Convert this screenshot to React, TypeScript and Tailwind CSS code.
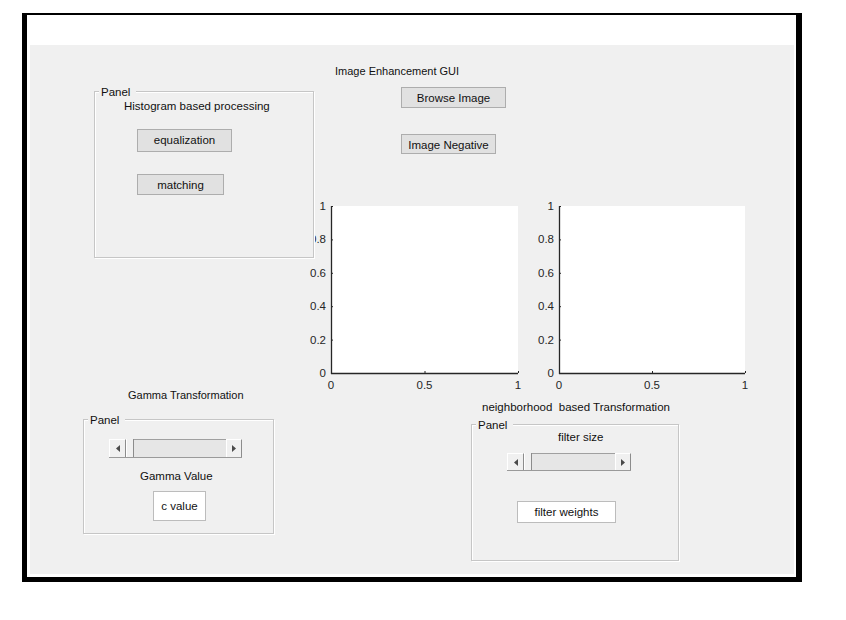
import type { ReactNode } from "react";

function Panel({ className, children }: { className: string; children: ReactNode }) {
  return (
    <div
      className={`relative border border-[#c6c6c6] bg-[#f0f0f0] shadow-[1px_1px_0_#ffffff,inset_1px_1px_0_#ffffff] ${className}`}
    >
      <span className="absolute -top-[7px] left-[4px] bg-[#f0f0f0] pl-[2px] pr-[6px] text-[11.5px] leading-[14px] text-[#111111]">
        Panel
      </span>
      <div className="flex flex-col items-start">{children}</div>
    </div>
  );
}

function Btn({ className, label }: { className: string; label: string }) {
  return (
    <button
      className={`flex items-center justify-center border border-[#adadad] bg-[#e1e1e1] text-[11.5px] whitespace-nowrap text-[#111111] ${className}`}
    >
      {label}
    </button>
  );
}

function EditBox({ className, label }: { className: string; label: string }) {
  return (
    <div
      className={`flex items-center justify-center border border-[#bcbcbc] bg-white pt-[1px] text-[11.5px] whitespace-nowrap text-[#111111] ${className}`}
    >
      {label}
    </div>
  );
}

function Arrow({ dir }: { dir: "left" | "right" }) {
  return (
    <svg width="4" height="7" viewBox="0 0 4 7">
      {dir === "left" ? (
        <polygon points="4,0 4,7 0,3.5" fill="#4a4a4a" />
      ) : (
        <polygon points="0,0 0,7 4,3.5" fill="#4a4a4a" />
      )}
    </svg>
  );
}

function Slider({ className }: { className: string }) {
  return (
    <div className={`flex border-b border-[#9a9a9a] ${className}`}>
      <div className="flex w-[17px] items-center justify-center border-t border-l border-white border-r border-r-[#8c8c8c] bg-[#f0f0f0]">
        <Arrow dir="left" />
      </div>
      <div className="w-[8px] border-l border-white border-r border-r-[#8c8c8c] bg-[#f0f0f0]" />
      <div className="flex-1 border-t border-[#a0a0a0] bg-[#e6e6e6]" />
      <div className="flex w-[16px] items-center justify-center border-t border-l border-white border-r border-r-[#8c8c8c] bg-[#f0f0f0]">
        <Arrow dir="right" />
      </div>
    </div>
  );
}

// MATLAB-style empty axes, box off, ticks 0..1
function Axes({ width, plotLeft, plotWidth, className }: { width: number; plotLeft: number; plotWidth: number; className?: string }) {
  const top = 8;
  const bottom = 175;
  const h = bottom - top;
  const yTicks = [0, 0.2, 0.4, 0.6, 0.8, 1];
  const xTicks = [0, 0.5, 1];
  return (
    <svg width={width} height={196} className={className}>
      <rect x={plotLeft} y={top} width={plotWidth} height={h} fill="#ffffff" />
      {yTicks.map((v) => (
        <g key={v}>
          <line x1={plotLeft} x2={plotLeft + 2} y1={bottom - v * h + 0.5} y2={bottom - v * h + 0.5} stroke="#262626" />
          <text
            x={plotLeft - 5}
            y={bottom - v * h + 4}
            textAnchor="end"
            fontSize="11.5"
            fill="#262626"
            fontFamily="'Liberation Sans', Arial, sans-serif"
          >
            {v === 0 || v === 1 ? String(v) : v.toFixed(1)}
          </text>
        </g>
      ))}
      {xTicks.map((v) => (
        <g key={v}>
          <line x1={plotLeft + v * plotWidth + 0.5} x2={plotLeft + v * plotWidth + 0.5} y1={bottom} y2={bottom - 2} stroke="#262626" />
          <text
            x={plotLeft + v * plotWidth}
            y={191}
            textAnchor="middle"
            fontSize="11.5"
            fill="#262626"
            fontFamily="'Liberation Sans', Arial, sans-serif"
          >
            {String(v)}
          </text>
        </g>
      ))}
      <line x1={plotLeft + 0.5} x2={plotLeft + 0.5} y1={top} y2={bottom + 1} stroke="#262626" strokeWidth="1.3" />
      <line x1={plotLeft} x2={plotLeft + plotWidth} y1={bottom + 0.5} y2={bottom + 0.5} stroke="#262626" strokeWidth="1.3" />
    </svg>
  );
}

export default function App() {
  return (
    <div className="h-[620px] w-[846px] bg-white pt-[13px] pl-[22px] font-['Liberation_Sans',Arial,sans-serif]">
      {/* figure window */}
      <div className="h-[569px] w-[780px] border-t-2 border-r-[6px] border-b-[5px] border-l-[5px] border-black bg-white pt-[30px] pl-[3px]">
        <div className="flex h-[529px] w-[764px] bg-[#f0f0f0] text-[#111111]">
          {/* LEFT COLUMN */}
          <div className="relative z-10 flex w-[284px] flex-col items-start">
            <Panel className="mt-[46px] ml-[64px] h-[167px] w-[220px]">
              <div className="mt-[7px] ml-[29px] h-[14px] text-[11.5px] leading-[14px] whitespace-nowrap">
                Histogram based processing
              </div>
              <Btn className="mt-[16px] ml-[42px] h-[23px] w-[95px] pt-[1px]" label="equalization" />
              <Btn className="mt-[22px] ml-[42px] h-[21px] w-[87px] pt-[2px]" label="matching" />
            </Panel>

            <div className="mt-[130px] ml-[98px] h-[14px] text-[11px] leading-[14px] whitespace-nowrap">
              Gamma Transformation
            </div>
            <Panel className="mt-[17px] ml-[53px] h-[115px] w-[191px]">
              <Slider className="mt-[19px] ml-[25px] h-[19px] w-[133px]" />
              <div className="mt-[11px] ml-[56px] h-[14px] text-[11.5px] leading-[14px] whitespace-nowrap">
                Gamma Value
              </div>
              <EditBox className="mt-[8px] ml-[69px] h-[30px] w-[53px]" label="c value" />
            </Panel>
          </div>

          {/* RIGHT COLUMN */}
          <div className="flex flex-1 flex-col items-start">
            <div className="mt-[19px] ml-[21px] h-[14px] text-[11px] leading-[14px] whitespace-nowrap">
              Image Enhancement GUI
            </div>
            <Btn className="mt-[9px] ml-[87px] h-[21px] w-[105px] pt-[3px]" label="Browse Image" />
            <Btn className="mt-[26px] ml-[87px] h-[20px] w-[95px] pt-[3px]" label="Image Negative" />

            <div className="mt-[44px] flex">
              <Axes width={220} plotLeft={26} plotWidth={187} className="-ml-[9px]" />
              <Axes width={235} plotLeft={34} plotWidth={186} />
            </div>

            <div className="mt-[6px] ml-[168px] h-[14px] text-[11.5px] leading-[14px] whitespace-pre">
              {"neighborhood  based Transformation"}
            </div>
            <Panel className="mt-[10px] ml-[157px] h-[137px] w-[208px]">
              <div className="mt-[5px] ml-[86px] h-[14px] text-[11.5px] leading-[14px] whitespace-nowrap">
                filter size
              </div>
              <Slider className="mt-[9px] ml-[35px] h-[18px] w-[124px]" />
              <EditBox className="mt-[30px] ml-[45px] h-[22px] w-[99px]" label="filter weights" />
            </Panel>
          </div>
        </div>
      </div>
    </div>
  );
}
